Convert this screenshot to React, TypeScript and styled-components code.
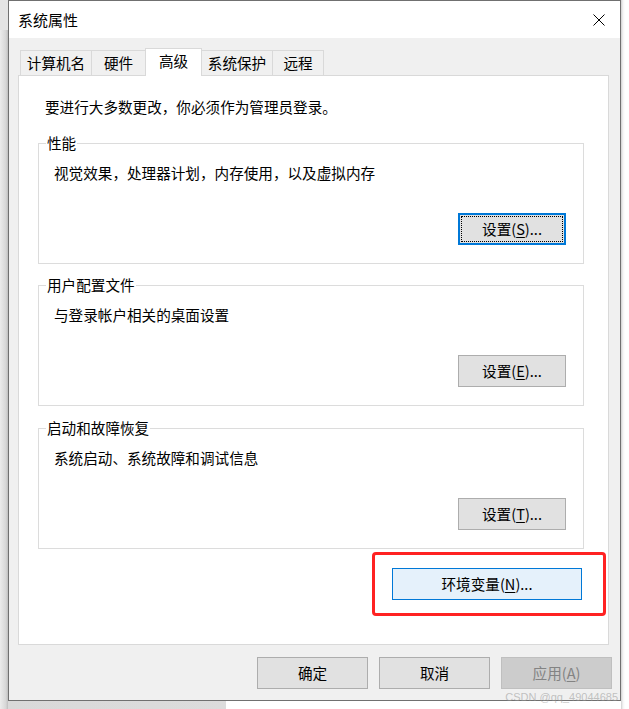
import styled, { createGlobalStyle } from 'styled-components';

const GlobalStyle = createGlobalStyle`
  html, body {
    margin: 0;
    padding: 0;
    background: #ffffff;
  }
  body {
    font-family: "Noto Sans CJK SC", "Liberation Sans", sans-serif;
    color: #000;
  }
`;

const Screen = styled.div`
  position: relative;
  width: 629px;
  height: 709px;
  display: flex;
  align-items: flex-start;
  overflow: hidden;
  background: #ffffff;
`;

const LeftGutter = styled.div`
  width: 8px;
  height: 709px;
  flex: none;
  background: linear-gradient(to right, #ececec 0, #d6d6d6 6px, #bdbdbd 8px);
  border-top: 30px solid #e4e4e4;
  box-sizing: border-box;
`;

const WindowColumn = styled.div`
  display: flex;
  flex-direction: column;
  flex: none;
`;

const BottomStrip = styled.div`
  height: 8px;
  background: linear-gradient(to right, #d9d9d9 0, #dcdcdc 218px, #ffffff 218px);
`;

const RightGutter = styled.div`
  flex: 1;
  height: 709px;
  background: linear-gradient(to right, #d0d0d0 0, #f4f4f4 2px, #ffffff 4px);
`;

const Window = styled.div`
  width: 613px;
  height: 701px;
  box-sizing: border-box;
  border: 1px solid #707070;
  background: #f0f0f0;
  display: flex;
  flex-direction: column;
`;

const TitleBar = styled.div`
  height: 37px;
  background: #ffffff;
  display: flex;
  align-items: center;
  justify-content: space-between;
  padding: 0 14px 0 9px;
`;

const Title = styled.span`
  font-size: 15px;
  line-height: 20px;
`;

const CloseButton = styled.div`
  width: 14px;
  height: 14px;
  display: flex;
  align-items: center;
  justify-content: center;
`;

const Body = styled.div`
  flex: 1;
  display: flex;
  flex-direction: column;
  padding: 10px 11px 11px 9px;
  font-size: 14.6px;
`;

const TabRow = styled.div`
  display: flex;
  align-items: flex-end;
  height: 27px;
  padding-left: 2px;
`;

const Tab = styled.div<{ $width: number; $active?: boolean }>`
  position: relative;
  box-sizing: border-box;
  width: ${(p) => p.$width}px;
  height: ${(p) => (p.$active ? 28 : 25)}px;
  margin-left: -1px;
  margin-bottom: ${(p) => (p.$active ? -1 : 0)}px;
  border: 1px solid #d9d9d9;
  border-bottom: none;
  background: ${(p) => (p.$active ? '#ffffff' : '#f0f0f0')};
  z-index: ${(p) => (p.$active ? 2 : 1)};
  display: flex;
  align-items: center;
  justify-content: center;
  padding-bottom: ${(p) => (p.$active ? 3 : 0)}px;
  line-height: 20px;
  white-space: nowrap;
  &:first-child {
    margin-left: 0;
  }
`;

const Panel = styled.div`
  box-sizing: border-box;
  height: 570px;
  border: 1px solid #d9d9d9;
  background: #ffffff;
  padding-top: 21px;
  display: flex;
  flex-direction: column;
`;

const Intro = styled.div`
  padding-left: 26px;
  line-height: 20px;
`;

const Group = styled.fieldset<{ $gap: number }>`
  box-sizing: border-box;
  width: 546px;
  min-width: 0;
  margin: ${(p) => p.$gap}px 0 0 19px;
  padding: 0 0 18px 0;
  border: 1px solid #dcdcdc;
`;

const Legend = styled.legend`
  margin-left: 7px;
  padding: 0 1px;
  line-height: 20px;
`;

const GroupText = styled.div`
  margin-top: 10px;
  padding-left: 15px;
  line-height: 20px;
`;

const GroupActions = styled.div`
  display: flex;
  justify-content: flex-end;
  margin-top: 30px;
  padding-right: 17px;
`;

const Button = styled.button<{ $width?: number; $variant?: 'focus' | 'hover' | 'disabled' }>`
  box-sizing: border-box;
  width: ${(p) => p.$width ?? 108}px;
  height: 32px;
  padding: 0;
  margin: 0;
  font: inherit;
  font-size: 14.6px;
  line-height: 20px;
  color: ${(p) => (p.$variant === 'disabled' ? '#838383' : '#000000')};
  background: ${(p) =>
    p.$variant === 'hover' ? '#e5f1fb' : p.$variant === 'disabled' ? '#cccccc' : '#e1e1e1'};
  border: ${(p) =>
    p.$variant === 'focus'
      ? '2px solid #0078d7'
      : p.$variant === 'hover'
        ? '1px solid #0078d7'
        : p.$variant === 'disabled'
          ? '1px solid #bfbfbf'
          : '1px solid #adadad'};
  outline: ${(p) => (p.$variant === 'focus' ? '1px dotted #000' : 'none')};
  outline-offset: -4px;
  border-radius: 0;
  u {
    text-decoration-thickness: 1px;
    text-underline-offset: 2px;
  }
`;

const Highlight = styled.div`
  align-self: flex-end;
  margin: 3px 2px 0 0;
  padding: 13px 21px 13px 17px;
  border: 3px solid #ff2222;
  border-radius: 4px;
  display: flex;
`;

const Footer = styled.div`
  display: flex;
  justify-content: flex-end;
  gap: 11px;
  margin: 12px -3px 0 0;
`;

const Watermark = styled.div`
  position: absolute;
  right: 11px;
  bottom: 5px;
  font-family: "Liberation Sans", Arial, sans-serif;
  font-size: 11px;
  line-height: 13px;
  color: rgba(150, 150, 150, 0.55);
`;

const tabs = [
  { label: '计算机名', width: 72 },
  { label: '硬件', width: 55 },
  { label: '高级', width: 57, active: true },
  { label: '系统保护', width: 72 },
  { label: '远程', width: 52 },
];

const groups = [
  {
    title: '性能',
    text: '视觉效果，处理器计划，内存使用，以及虚拟内存',
    key: 'S',
    focus: true,
    gap: 16,
  },
  { title: '用户配置文件', text: '与登录帐户相关的桌面设置', key: 'E', gap: 11 },
  { title: '启动和故障恢复', text: '系统启动、系统故障和调试信息', key: 'T', gap: 12 },
];

const CloseIcon = () => (
  <svg width="12" height="12" viewBox="0 0 12 12">
    <path d="M0.5 0.5 L11.5 11.5 M11.5 0.5 L0.5 11.5" stroke="#000" strokeWidth="1" fill="none" />
  </svg>
);

export default function App() {
  return (
    <>
      <GlobalStyle />
      <Screen>
        <LeftGutter />
        <WindowColumn>
          <Window>
            <TitleBar>
              <Title>系统属性</Title>
              <CloseButton>
                <CloseIcon />
              </CloseButton>
            </TitleBar>
            <Body>
              <TabRow>
                {tabs.map((t) => (
                  <Tab key={t.label} $width={t.width} $active={t.active}>
                    {t.label}
                  </Tab>
                ))}
              </TabRow>
              <Panel>
                <Intro>要进行大多数更改，你必须作为管理员登录。</Intro>
                {groups.map((g) => (
                  <Group key={g.title} $gap={g.gap}>
                    <Legend>{g.title}</Legend>
                    <GroupText>{g.text}</GroupText>
                    <GroupActions>
                      <Button $variant={g.focus ? 'focus' : undefined}>
                        设置(<u>{g.key}</u>)...
                      </Button>
                    </GroupActions>
                  </Group>
                ))}
                <Highlight>
                  <Button $width={190} $variant="hover">
                    环境变量(<u>N</u>)...
                  </Button>
                </Highlight>
              </Panel>
              <Footer>
                <Button $width={111}>确定</Button>
                <Button $width={111}>取消</Button>
                <Button $width={111} $variant="disabled">
                  应用(<u>A</u>)
                </Button>
              </Footer>
            </Body>
          </Window>
          <BottomStrip />
        </WindowColumn>
        <RightGutter />
        <Watermark>CSDN @qq_49044685</Watermark>
      </Screen>
    </>
  );
}
